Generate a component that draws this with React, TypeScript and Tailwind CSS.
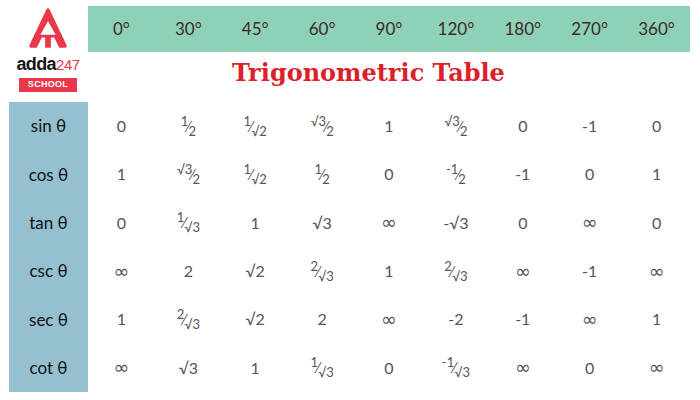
import React from 'react';

type Cell = string | [string, string];

const angles = ['0°', '30°', '45°', '60°', '90°', '120°', '180°', '270°', '360°'];

// fractions are [numerator, denominator]
const rows: { label: string; values: Cell[] }[] = [
  { label: 'sin θ', values: ['0', ['1', '2'], ['1', '√2'], ['√3', '2'], '1', ['√3', '2'], '0', '-1', '0'] },
  { label: 'cos θ', values: ['1', ['√3', '2'], ['1', '√2'], ['1', '2'], '0', ['-1', '2'], '-1', '0', '1'] },
  { label: 'tan θ', values: ['0', ['1', '√3'], '1', '√3', '∞', '-√3', '0', '∞', '0'] },
  { label: 'csc θ', values: ['∞', '2', '√2', ['2', '√3'], '1', ['2', '√3'], '∞', '-1', '∞'] },
  { label: 'sec θ', values: ['1', ['2', '√3'], '√2', '2', '∞', '-2', '-1', '∞', '1'] },
  { label: 'cot θ', values: ['∞', '√3', '1', ['1', '√3'], '0', ['-1', '√3'], '∞', '0', '∞'] },
];

const Frac: React.FC<{ num: string; den: string }> = ({ num, den }) => (
  <span className="inline-flex items-center">
    <span className="text-[13px] leading-none -translate-y-[5px]">{num}</span>
    <span className="text-[15px] leading-none mx-[-1px]">⁄</span>
    <span className="text-[13px] leading-none translate-y-[5px]">{den}</span>
  </span>
);

const Value: React.FC<{ v: Cell }> = ({ v }) => {
  if (typeof v !== 'string') return <Frac num={v[0]} den={v[1]} />;
  if (v === '∞') return <span className="font-['DejaVu_Sans',sans-serif] text-[19px] leading-none">∞</span>;
  return <span>{v}</span>;
};

const Logo: React.FC = () => (
  <div className="flex flex-col items-center pt-[7px] pl-[8px]">
    <svg width="38" height="42" viewBox="0 0 40 42">
      <path d="M20 2 L38 40 L2 40 Z" fill="#e8384a" stroke="#e8384a" strokeWidth="3.5" strokeLinejoin="round" />
      <path d="M20 14 L28 28 L12 28 Z" fill="#fff" />
      <path d="M8 42 L13.5 31 L17 31 L17 42 Z" fill="#fff" />
      <path d="M23 31 L26.5 31 L32 42 L23 42 Z" fill="#fff" />
    </svg>
    <div className="mt-[6px] flex items-baseline leading-none font-['Liberation_Sans',sans-serif]">
      <span className="text-[18px] font-bold tracking-[-0.6px] text-[#151515]">adda</span>
      <span className="text-[15px] text-[#e8384a] tracking-[-0.5px]">247</span>
    </div>
    <div className="mt-[5px] w-[58px] h-[14px] bg-[#e8384a] flex items-center justify-center">
      <span className="text-[9px] font-bold text-white font-['Liberation_Sans',sans-serif] tracking-[0.3px]">SCHOOL</span>
    </div>
  </div>
);

export default function App() {
  return (
    <div className="w-[700px] h-[400px] bg-white font-['Lato','Open_Sans',sans-serif] overflow-hidden">
      <div className="flex h-[102px]">
        <div className="w-[88px]">
          <Logo />
        </div>
        <div className="w-[602px] flex flex-col">
          <div className="mt-[6px] h-[46px] bg-[#8fd1b6] flex items-center">
            {angles.map((a) => (
              <div key={a} className="w-[66.9px] text-center text-[17px] text-[#3b2a2a]">
                {a}
              </div>
            ))}
          </div>
          <div className="flex-1 flex items-center pl-[144px] pb-[8px]">
            <span className="text-[24px] font-bold text-[#dc1f2b] font-['DejaVu_Serif',serif]">
              Trigonometric Table
            </span>
          </div>
        </div>
      </div>
      <div className="flex flex-col">
        {rows.map((r) => (
          <div key={r.label} className="flex h-[48.3px]">
            <div className="ml-[9px] w-[79px] bg-[#94c0d0] flex items-center justify-center text-[17px] text-[#111]">
              {r.label}
            </div>
            {r.values.map((v, i) => (
              <div key={i} className="w-[66.9px] flex items-center justify-center text-[16px] text-[#555]">
                <Value v={v} />
              </div>
            ))}
          </div>
        ))}
      </div>
    </div>
  );
}
